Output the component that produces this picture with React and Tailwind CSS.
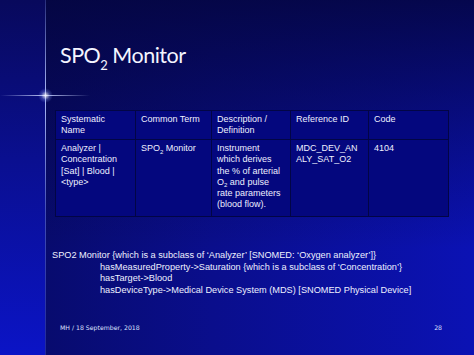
import React from "react";

export default function App() {
  const cell = "border border-[#020545] px-[5px] pt-[3px] align-top";
  return (
    <div className="relative w-[474px] h-[355px] overflow-hidden flex bg-[linear-gradient(90deg,#070a66_0%,#0a0e8c_45%,#0b12b4_100%)] font-['Liberation_Sans',Arial,sans-serif] text-[#eef0ff]">
      {/* top darkening overlay */}
      <div className="absolute inset-0 bg-[linear-gradient(180deg,rgba(4,5,60,0.85)_0%,rgba(4,5,60,0.35)_40%,rgba(4,5,60,0)_70%)] pointer-events-none" />
      {/* left strip */}
      <div className="relative w-[45px] shrink-0 bg-[linear-gradient(180deg,#08095c_0%,#0a0f90_45%,#0b14c6_100%)]" />
      <div className="relative w-px shrink-0 bg-[linear-gradient(180deg,rgba(120,140,255,0.3)_0%,rgba(180,195,255,0.95)_27%,rgba(120,140,255,0.5)_60%,rgba(90,110,255,0.3)_100%)]" />
      {/* cross sparkle */}
      <div className="absolute left-0 top-[95px] w-[90px] h-px bg-[linear-gradient(90deg,rgba(140,160,255,0)_0%,rgba(200,210,255,0.95)_50%,rgba(140,160,255,0)_100%)]" />
      <div className="absolute left-[38px] top-[88px] w-[15px] h-[15px] rounded-full bg-[radial-gradient(circle,rgba(255,255,255,0.9)_0%,rgba(150,170,255,0.3)_40%,rgba(150,170,255,0)_70%)]" />

      {/* main */}
      <div className="relative flex-1 flex flex-col">
        <h1 className="ml-[14px] mt-[40px] h-[30px] font-['Lato',sans-serif] text-[21.5px] tracking-[-0.5px] leading-[30px] text-[#f4f5ff]">
          SPO<sub className="text-[13px] align-[-4px] leading-none">2</sub> Monitor
        </h1>
        <table className="ml-[9px] mt-[40px] w-[393px] border-collapse text-[9px] leading-[11.3px] table-fixed bg-[#04077e]">
          <colgroup>
            <col className="w-[80px]" />
            <col className="w-[76px]" />
            <col className="w-[79px]" />
            <col className="w-[78px]" />
            <col className="w-[80px]" />
          </colgroup>
          <tbody>
            <tr className="h-[29px]">
              <td className={cell}>Systematic Name</td>
              <td className={cell}>Common Term</td>
              <td className={cell}>Description / Definition</td>
              <td className={cell}>Reference ID</td>
              <td className={cell}>Code</td>
            </tr>
            <tr className="h-[77px]">
              <td className={cell}>
                Analyzer |<br />Concentration<br />[Sat] | Blood |<br />&lt;type&gt;
              </td>
              <td className={cell}>
                SPO<sub className="text-[6px] align-[-1px] leading-none">2</sub> Monitor
              </td>
              <td className={cell}>
                Instrument<br />which derives<br />the % of arterial<br />O<sub className="text-[6px] align-[-1px] leading-none">2</sub> and pulse<br />rate parameters<br />(blood flow).
              </td>
              <td className={cell}>
                MDC_DEV_AN<br />ALY_SAT_O2
              </td>
              <td className={cell}>4104</td>
            </tr>
          </tbody>
        </table>
        <div className="ml-[6px] mt-[33px] text-[9.2px] leading-[11.5px]">
          <div>SPO2 Monitor {"{"}which is a subclass of ‘Analyzer’ [SNOMED: ‘Oxygen analyzer’]{"}"}</div>
          <div className="pl-[48px]">hasMeasuredProperty-&gt;Saturation {"{"}which is a subclass of ‘Concentration’{"}"}</div>
          <div className="pl-[48px]">hasTarget-&gt;Blood</div>
          <div className="pl-[48px]">hasDeviceType-&gt;Medical Device System (MDS) [SNOMED Physical Device]</div>
        </div>
        <div className="mt-[28px] ml-[14px] mr-[32px] flex justify-between font-['DejaVu_Sans',sans-serif] text-[6.2px] leading-[8px] text-[#dfe3ff]">
          <span>MH / 18 September, 2018</span>
          <span>28</span>
        </div>
      </div>
    </div>
  );
}
